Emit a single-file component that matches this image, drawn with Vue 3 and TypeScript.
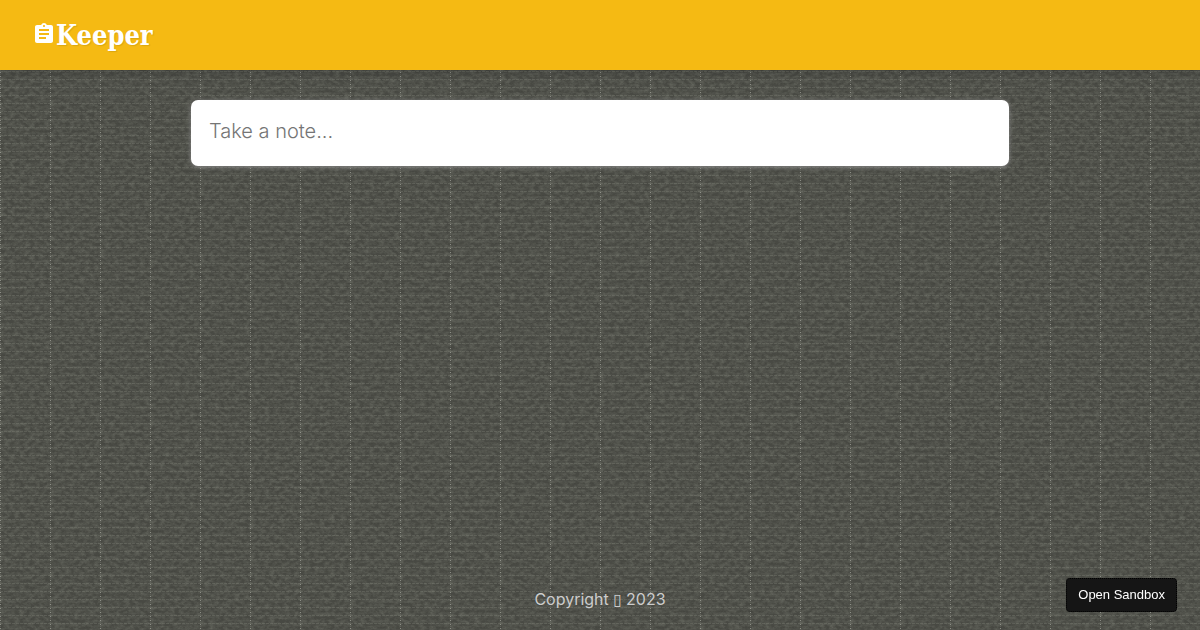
<script setup lang="ts">
import { ref } from 'vue'

const note = ref('')
</script>

<template>
  <div class="page">
    <svg class="fabric" aria-hidden="true">
      <defs>
        <filter id="weave" x="0" y="0" width="100%" height="100%" color-interpolation-filters="sRGB">
          <feTurbulence type="fractalNoise" baseFrequency="0.2 0.3" numOctaves="3" seed="7" />
          <feColorMatrix values="0 0 0 0 0.48  0 0 0 0 0.49  0 0 0 0 0.45  0.9 0 0 0 -0.29" />
        </filter>
        <pattern id="threads" width="50" height="8" patternUnits="userSpaceOnUse">
          <path d="M0 7.5H50" stroke="#7c7d74" stroke-opacity=".38" stroke-dasharray="3 1" />
          <path d="M0 3.5H50" stroke="#30312b" stroke-opacity=".12" stroke-dasharray="2 1" />
          <path d="M.5 0V8" stroke="#b4b5ad" stroke-opacity=".6" stroke-dasharray="1 3" />
          <path d="M.5 2V8" stroke="#a3a49c" stroke-opacity=".2" stroke-dasharray="1 3" />
        </pattern>
      </defs>
      <rect width="100%" height="100%" fill="#484943" />
      <rect width="100%" height="100%" filter="url(#weave)" />
      <rect width="100%" height="100%" fill="url(#threads)" />
    </svg>

    <header class="bar">
      <h1 class="brand">
        <svg class="logo" viewBox="0 0 24 24" aria-hidden="true">
          <path fill="#fff" d="M19 3h-4.180C14.400 1.840 13.300 1 12 1s-2.400.84-2.820 2H5c-1.100 0-2 .9-2 2v14c0 1.100.9 2 2 2h14c1.100 0 2-.9 2-2V5c0-1.100-.9-2-2-2zm-7 0c.55 0 1 .45 1 1s-.45 1-1 1-1-.45-1-1 .45-1 1-1zm2 14H7v-2h7v2zm3-4H7v-2h10v2zm0-4H7V7h10v2z" />
        </svg>
        <span>Keeper</span>
      </h1>
    </header>

    <main class="content">
      <form class="card" @submit.prevent>
        <textarea v-model="note" class="note" rows="1" placeholder="Take a note..." aria-label="Take a note"></textarea>
      </form>
    </main>

    <footer class="foot">Copyright <span class="mark">▯</span>2023</footer>
    <button class="sandbox" type="button">Open Sandbox</button>
  </div>
</template>

<style>
body {
  background: #4e4f48;
}
</style>

<style scoped>
.page {
  position: relative;
  display: flex;
  flex-direction: column;
  min-height: 100vh;
  font-family: Inter, "Open Sans", sans-serif;
}
.fabric {
  position: absolute;
  inset: 0;
  width: 100%;
  height: 100%;
}
.bar {
  position: relative;
  display: flex;
  align-items: flex-start;
  height: 70px;
  padding: 14px 32px 0;
  box-sizing: border-box;
  background: #f5ba13;
  box-shadow: 0 0 10px rgba(0, 0, 0, 0.3);
}
.brand {
  display: flex;
  align-items: flex-start;
  margin: 0;
  color: #fff;
  font: 700 27px/44px "DejaVu Serif Condensed", "DejaVu Serif", serif;
  text-shadow: 1px 1px 1px rgba(120, 90, 0, 0.2);
}
.logo {
  width: 24px;
  height: 24px;
  margin-top: 8px;
}
.content {
  position: relative;
  flex: 1;
  padding: 30px 16px;
}
.card {
  box-sizing: border-box;
  max-width: 818px;
  margin: 0 auto;
  padding: 16px 18px;
  border-radius: 7px;
  background: #fff;
  box-shadow: 0 1px 5px rgb(138, 137, 137);
}
.note {
  display: block;
  width: 100%;
  height: 34px;
  padding: 0;
  border: 0;
  outline: 0;
  resize: none;
  overflow: hidden;
  background: transparent;
  color: #333;
  font: 300 20px/30px Inter, "Open Sans", sans-serif;
}
.note::placeholder {
  color: #757575;
  opacity: 1;
}
.foot {
  position: relative;
  padding-bottom: 18px;
  color: #ccc;
  font-size: 16px;
  line-height: 24px;
  text-align: center;
}
.mark {
  padding-right: 4px;
  font-family: "DejaVu Sans", sans-serif;
}
.sandbox {
  position: fixed;
  right: 23px;
  bottom: 18px;
  padding: 0 11px;
  border: 1px dotted #000;
  border-radius: 4px;
  background: #151515;
  color: #fff;
  font: 13px/32px "Liberation Sans", Arial, sans-serif;
}
</style>
